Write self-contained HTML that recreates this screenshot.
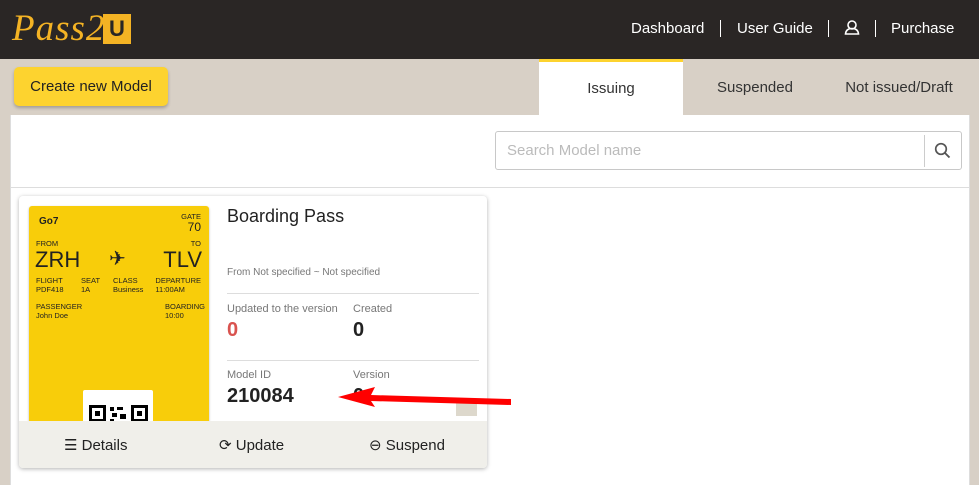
<!DOCTYPE html>
<html><head><meta charset="utf-8"><style>
*{margin:0;padding:0;box-sizing:border-box}
body{width:979px;height:478px;overflow:hidden;background:#d8d0c6;font-family:"Liberation Sans",Arial,sans-serif;position:relative}
.hdr{position:absolute;left:0;top:0;width:979px;height:59px;background:#2a2625}
.logo{position:absolute;left:12px;top:7px;font-family:"Liberation Serif",serif;font-style:italic;color:#f4b324;font-size:37px;letter-spacing:1px}
.logo .u{display:inline-block;background:#f4b324;color:#2a2625;font-style:normal;font-family:"Liberation Sans";font-weight:bold;font-size:22px;width:28px;height:30px;text-align:center;line-height:30px;vertical-align:4px;margin-left:-2px}
.nav{position:absolute;top:20px;color:#fff;font-size:15px}
.sep{position:absolute;top:20px;width:1px;height:17px;background:#fff}
.btn{position:absolute;left:14px;top:67px;width:154px;height:39px;background:#fdd32f;border-radius:5px;box-shadow:0 2px 3px rgba(0,0,0,.25);font-size:15px;color:#222;text-align:center;line-height:39px}
.tab{position:absolute;top:59px;height:56px;line-height:58px;font-size:15px;color:#333;text-align:center}
.main{position:absolute;left:10px;top:115px;width:960px;height:370px;background:#fff;border-left:1px solid #ddd;border-right:1px solid #ddd}
.search{position:absolute;left:495px;top:131px;width:467px;height:39px;border:1px solid #c8c8c8;border-radius:3px;font-size:15px;color:#bbb;line-height:38px;padding-left:11px}
.search .d{position:absolute;right:36px;top:3px;width:1px;height:32px;background:#ccc}
.hr{position:absolute;left:10px;top:187px;width:960px;height:1px;background:#ddd}
.card{position:absolute;left:19px;top:196px;width:468px;height:272px;background:#fff;border-radius:4px;box-shadow:0 1px 4px rgba(0,0,0,.3);overflow:hidden}
.pass{position:absolute;left:10px;top:10px;width:180px;height:220px;background:#f8cd0a;border-radius:3px;color:#222;box-shadow:0 1px 2px rgba(0,0,0,.3)}
.pass div{position:absolute;font-size:7.5px;line-height:9px}
.foot{position:absolute;left:0;top:225px;width:468px;height:47px;background:#f0efea;font-size:15px;color:#222}
.foot span{position:absolute;top:15px}
.lbl{position:absolute;font-size:11px;color:#777}
.val{position:absolute;font-size:20px;font-weight:bold;color:#222}
.line{position:absolute;left:208px;width:252px;height:1px;background:#ddd}
</style></head><body>
<div class="hdr">
<div class="logo">Pass2<span class="u">U</span></div>
<div class="nav" style="left:631px">Dashboard</div><div class="sep" style="left:720px"></div>
<div class="nav" style="left:737px">User Guide</div><div class="sep" style="left:828px"></div>
<svg style="position:absolute;left:844px;top:20px" width="16" height="15" viewBox="0 0 16 15"><circle cx="8" cy="5" r="4" fill="none" stroke="#fff" stroke-width="1.6"/><path d="M1.5 14 Q2 8.5 8 8.5 Q14 8.5 14.5 14 Z" fill="none" stroke="#fff" stroke-width="1.6"/></svg>
<div class="sep" style="left:875px"></div>
<div class="nav" style="left:891px">Purchase</div>
</div>
<div class="btn">Create new Model</div>
<div class="tab" style="left:539px;width:144px;background:#fff;border-top:3px solid #fdd32f;line-height:53px">Issuing</div>
<div class="tab" style="left:683px;width:144px">Suspended</div>
<div class="tab" style="left:827px;width:144px">Not issued/Draft</div>
<div class="main"></div>
<div class="search">Search Model name<div class="d"></div>
<svg style="position:absolute;right:10px;top:10px" width="17" height="17" viewBox="0 0 17 17"><circle cx="7" cy="7" r="5.3" fill="none" stroke="#555" stroke-width="1.7"/><path d="M11 11 L15.5 15.5" stroke="#555" stroke-width="1.9"/></svg></div>
<div class="hr"></div>
<div class="card">
<div class="pass">
<div style="left:10px;top:11px;font-size:10px;font-weight:bold">Go7</div>
<div style="right:8px;top:6px">GATE</div><div style="right:8px;top:15px;font-size:12px;line-height:13px">70</div>
<div style="left:7px;top:33px">FROM</div><div style="right:8px;top:33px">TO</div>
<div style="left:6px;top:42px;font-size:22px;line-height:24px">ZRH</div>
<div style="left:80px;top:42px;font-size:20px;line-height:22px">✈</div>
<div style="right:7px;top:42px;font-size:22px;line-height:24px">TLV</div>
<div style="left:7px;top:70px">FLIGHT<br>PDF418</div><div style="left:52px;top:70px">SEAT<br>1A</div>
<div style="left:84px;top:70px">CLASS<br>Business</div><div style="right:8px;top:70px">DEPARTURE<br>11:00AM</div>
<div style="left:7px;top:96px">PASSENGER<br>John Doe</div><div style="left:136px;top:96px">BOARDING<br>10:00</div>
<div style="left:54px;top:184px;width:70px;height:36px;background:#fff;border-radius:2px"></div>
<svg style="position:absolute;left:60px;top:199px" width="60" height="21" viewBox="0 0 60 21"><rect x="1.5" y="1.5" width="14" height="14" fill="none" stroke="#000" stroke-width="3"/><rect x="6" y="6" width="5" height="5"/><rect x="43.5" y="1.5" width="14" height="14" fill="none" stroke="#000" stroke-width="3"/><rect x="48" y="6" width="5" height="5"/><path d="M21 2h4v4h-4zM28 2h6v3h-6zM23 8h5v4h-5zM31 9h6v5h-6zM21 14h4v4h-4zM27 16h5v3h-5z"/></svg>
</div>
<div style="position:absolute;left:208px;top:10px;font-size:18px;color:#222">Boarding Pass</div>
<div class="lbl" style="left:208px;top:71px;font-size:10px">From Not specified ~ Not specified</div>
<div class="line" style="top:97px"></div>
<div class="lbl" style="left:208px;top:107px">Updated to the version</div><div class="lbl" style="left:334px;top:107px">Created</div>
<div class="val" style="left:208px;top:123px;color:#d9534f">0</div><div class="val" style="left:334px;top:123px">0</div>
<div class="line" style="top:164px"></div>
<div class="lbl" style="left:208px;top:173px">Model ID</div><div class="lbl" style="left:334px;top:173px">Version</div>
<div class="val" style="left:208px;top:189px">210084</div><div class="val" style="left:334px;top:189px">0</div>
<div style="position:absolute;left:437px;top:204px;width:21px;height:16px;background:#ddd8cc;border-top:3px solid #5a9d4a"></div>
<div class="foot">
<span style="left:45px">☰ Details</span>
<span style="left:200px">⟳ Update</span>
<span style="left:350px">⊖ Suspend</span>
</div>
</div>
<svg style="position:absolute;left:335px;top:385px" width="180" height="25" viewBox="0 0 180 25"><path d="M3 12 L40 2 L36 10 L176 14 L176 20 L36 16 L40 22 Z" fill="#f00"/></svg>
</body></html>
